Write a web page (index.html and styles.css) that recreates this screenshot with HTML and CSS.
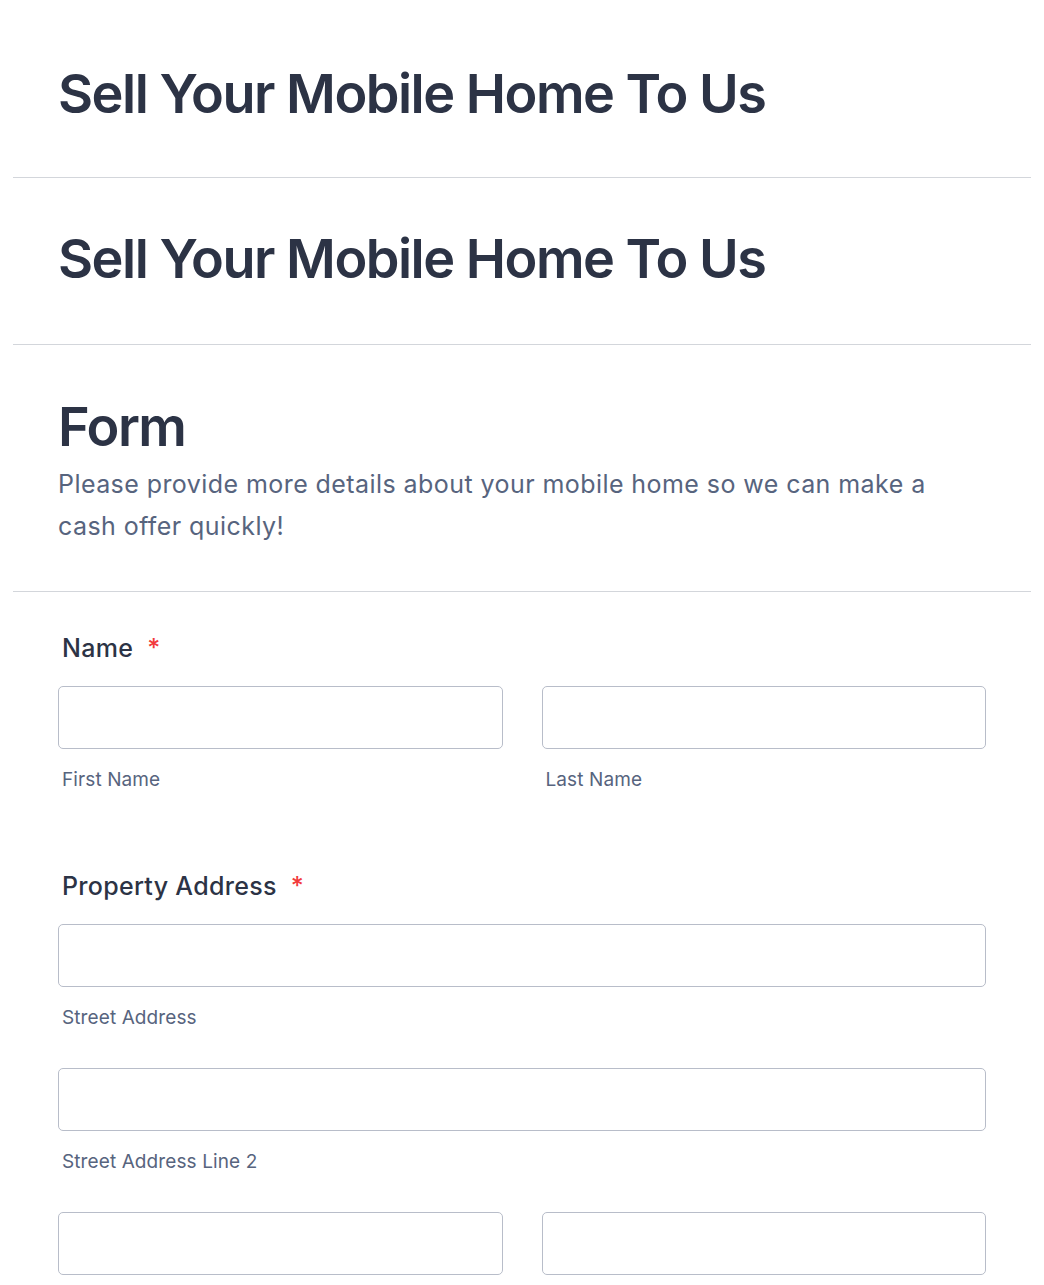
FILE: index.html
```html
<!DOCTYPE html>
<html lang="en">
<head>
<meta charset="utf-8">
<title>Sell Your Mobile Home To Us</title>
<link rel="stylesheet" href="styles.css">
</head>
<body>
<div class="form">
  <div class="section first">
    <h1 class="title">Sell Your Mobile Home To Us</h1>
  </div>
  <div class="section">
    <h1 class="title">Sell Your Mobile Home To Us</h1>
  </div>
  <div class="section intro">
    <h1 class="title">Form</h1>
    <p class="desc">Please provide more details about your mobile home so we can make a cash offer quickly!</p>
  </div>
  <div class="fields">
    <div class="field">
      <label class="label">Name<span class="req">*</span></label>
      <div class="row two">
        <div class="cell">
          <div class="input"></div>
          <div class="sub">First Name</div>
        </div>
        <div class="cell">
          <div class="input"></div>
          <div class="sub">Last Name</div>
        </div>
      </div>
    </div>
    <div class="field address">
      <label class="label">Property Address<span class="req">*</span></label>
      <div class="stack">
        <div class="cell">
          <div class="input"></div>
          <div class="sub">Street Address</div>
        </div>
        <div class="cell">
          <div class="input"></div>
          <div class="sub">Street Address Line 2</div>
        </div>
        <div class="row two">
          <div class="cell">
            <div class="input"></div>
          </div>
          <div class="cell">
            <div class="input"></div>
          </div>
        </div>
      </div>
    </div>
  </div>
</div>
</body>
</html>
```

FILE: styles.css
```css
html, body {
  margin: 0;
  padding: 0;
  background: #ffffff;
}

body {
  font-family: Inter, "Noto Sans", "Liberation Sans", sans-serif;
  color: #2c3345;
}

.form {
  width: 1018px;
  margin: 0 auto;
}

.section {
  padding: 48px 45px 52px 45px;
  border-bottom: 1px solid #d3d6db;
}

.section.first {
  padding-top: 61px;
  padding-bottom: 50px;
}

.section.intro {
  padding-top: 49px;
  padding-bottom: 44px;
}

.title {
  margin: 0;
  font-size: 54px;
  line-height: 66px;
  font-weight: 600;
  letter-spacing: -1.5px;
  color: #2c3345;
}

.desc {
  margin: 3px 0 0 0;
  font-size: 25px;
  line-height: 42px;
  letter-spacing: 0.43px;
  color: #57647e;
}

.fields {
  padding: 41px 45px 0 45px;
}

.field {
  display: flex;
  flex-direction: column;
}

.field.address {
  margin-top: 79px;
}

.label {
  display: block;
  font-size: 25px;
  line-height: 30px;
  font-weight: 500;
  letter-spacing: 0.3px;
  color: #2c3345;
  padding-left: 4px;
  margin-bottom: 23px;
}

.req {
  color: #f23a3c;
  margin-left: 14px;
}

.stack {
  display: flex;
  flex-direction: column;
  gap: 38px;
}

.row.two {
  display: grid;
  grid-template-columns: 1fr 1fr;
  column-gap: 39px;
}

.cell {
  display: flex;
  flex-direction: column;
}

.input {
  height: 61px;
  border: 1px solid #b8bdc9;
  border-radius: 5px;
  background: #ffffff;
}

.sub {
  margin-top: 19px;
  padding-left: 4px;
  font-size: 19px;
  line-height: 24px;
  letter-spacing: 0.1px;
  color: #57647e;
}
```
